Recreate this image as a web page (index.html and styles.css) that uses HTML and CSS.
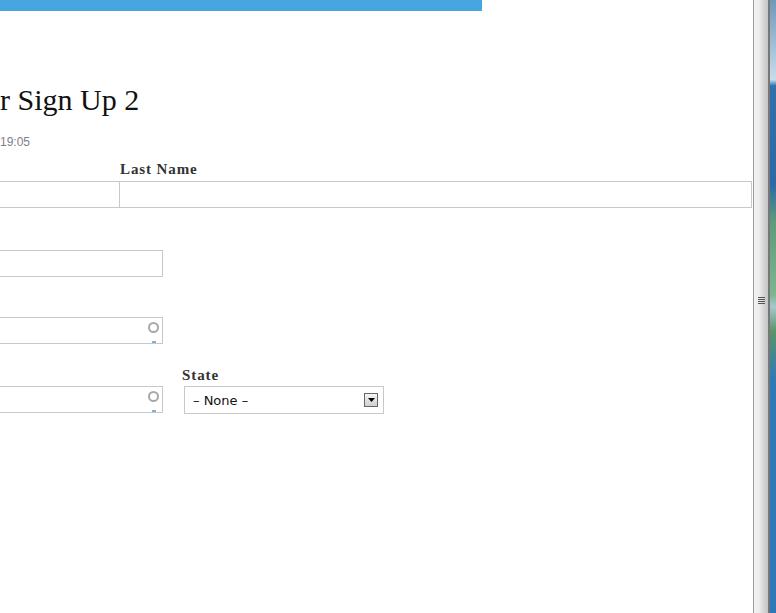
FILE: index.html
```html
<!DOCTYPE html>
<html>
<head>
<meta charset="utf-8">
<link rel="stylesheet" href="styles.css">
</head>
<body>
<div class="screen">
  <div class="page">
    <div class="topbar"></div>
    <h1 class="title">r Sign Up 2</h1>
    <div class="stamp">19:05</div>
    <div class="label-row">
      <span class="label last-label">Last Name</span>
    </div>
    <div class="name-row">
      <div class="field first-name"></div>
      <div class="field last-name"></div>
    </div>
    <div class="field short email"></div>
    <div class="icon-field phone">
      <div class="field short"></div>
      <span class="ring"></span>
      <span class="dash"></span>
    </div>
    <div class="row4">
      <div class="icon-field">
        <div class="field short"></div>
        <span class="ring"></span>
        <span class="dash"></span>
      </div>
      <div class="state-col">
        <span class="label">State</span>
        <div class="select">
          <span class="select-text">– None –</span>
          <span class="select-btn">
            <svg width="7" height="4" viewBox="0 0 7 4"><path d="M0 0H7L3.5 4Z" fill="#000"/></svg>
          </span>
        </div>
      </div>
    </div>
  </div>
  <div class="divider"></div>
  <div class="scrollbar">
    <div class="grip">
      <span></span><span></span><span></span><span></span>
    </div>
  </div>
  <div class="edge"></div>
  <div class="desktop"></div>
</div>
</body>
</html>
```
FILE: styles.css
```css
html, body {
  margin: 0;
  padding: 0;
  background: #fff;
}
.screen {
  width: 776px;
  height: 613px;
  display: flex;
  overflow: hidden;
}
.page {
  width: 753px;
  display: flex;
  flex-direction: column;
  align-items: flex-start;
  overflow: hidden;
}
.topbar {
  width: 482px;
  height: 11px;
  background: #45a6e0;
  flex: none;
}
.title {
  margin: 71px 0 0 0;
  font-family: "Liberation Serif", "DejaVu Serif", serif;
  font-weight: normal;
  font-size: 30px;
  line-height: 36px;
  color: #111;
  white-space: nowrap;
}
.stamp {
  margin-top: 17px;
  font-family: "Liberation Sans", Arial, sans-serif;
  font-size: 12px;
  line-height: 14px;
  color: #7a7f88;
}
.label-row {
  margin-top: 11px;
  display: flex;
}
.label {
  font-family: "Liberation Serif", "DejaVu Serif", serif;
  font-weight: bold;
  font-size: 15px;
  line-height: 18px;
  letter-spacing: 0.9px;
  color: #333;
  white-space: nowrap;
}
.last-label {
  margin-left: 120px;
}
.name-row {
  margin-top: 3px;
  display: flex;
}
.field {
  box-sizing: border-box;
  height: 27px;
  border: 1px solid #c8c8c8;
  border-left: none;
  background: #fff;
}
.first-name {
  width: 120px;
}
.last-name {
  width: 632px;
}
.short {
  width: 163px;
}
.email {
  margin-top: 42px;
}
.icon-field {
  position: relative;
  width: 163px;
}
.phone {
  margin-top: 40px;
}
.ring {
  position: absolute;
  left: 148px;
  top: 5px;
  width: 7px;
  height: 7px;
  border: 2px solid #a8a8a8;
  border-radius: 50%;
}
.dash {
  position: absolute;
  left: 152px;
  top: 24px;
  width: 4px;
  height: 2px;
  background: #7fb0da;
}
.row4 {
  margin-top: 22px;
  display: flex;
  align-items: flex-end;
}
.row4 .icon-field {
  margin-bottom: 1px;
}
.state-col {
  margin-left: 19px;
  display: flex;
  flex-direction: column;
  align-items: flex-start;
}
.select {
  margin: 2px 0 0 2px;
  box-sizing: border-box;
  width: 200px;
  height: 28px;
  border: 1px solid #c8c8c8;
  display: flex;
  align-items: center;
  justify-content: space-between;
  padding: 0 4px 0 8px;
}
.select-text {
  font-family: "DejaVu Sans", Verdana, sans-serif;
  font-size: 13px;
  color: #111;
}
.select-btn {
  box-sizing: border-box;
  width: 14px;
  height: 14px;
  margin-right: 1px;
  border: 1px solid #666;
  background: linear-gradient(#f6f6f6, #d0d0d0);
  display: flex;
  align-items: center;
  justify-content: center;
}
.divider {
  width: 1px;
  background: #9a9a9a;
  flex: none;
}
.scrollbar {
  width: 14px;
  flex: none;
  background: linear-gradient(to right, #f2f2f2 0%, #ececec 35%, #d2d2d2 75%, #c4c4c4 100%);
  display: flex;
  flex-direction: column;
  align-items: center;
}
.grip {
  margin-top: 297px;
  display: flex;
  flex-direction: column;
  gap: 1px;
}
.grip span {
  width: 7px;
  height: 1px;
  background: #555;
}
.edge {
  width: 2px;
  flex: none;
  background: #777;
}
.desktop {
  flex: 1;
  background: linear-gradient(to bottom, #6f98b8 0%, #c9dcea 13%, #2f70ad 14%, #2b6aa6 30%, #5d9a7a 36%, #7eb58e 48%, #a7c7d0 50%, #5b9468 54%, #2e79b8 62%, #2c78bb 100%);
}
```
